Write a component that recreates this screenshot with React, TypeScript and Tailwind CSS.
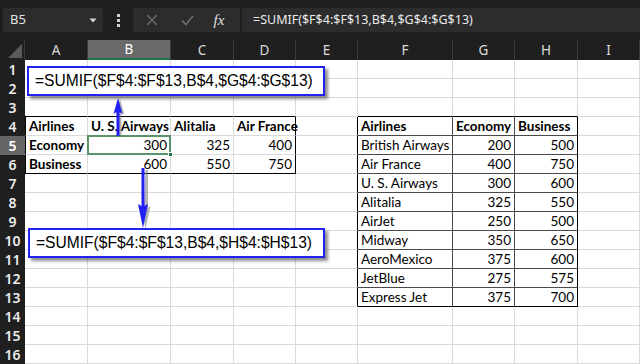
import React from "react";

type Cell = { t: string; b?: boolean; r?: boolean };

const COLS = ["A", "B", "C", "D", "E", "F", "G", "H", "I"];

const data: Record<string, Cell> = {
  A4: { t: "Airlines", b: true },
  B4: { t: "U. S. Airways", b: true },
  C4: { t: "Alitalia", b: true },
  D4: { t: "Air France", b: true },
  A5: { t: "Economy", b: true },
  B5: { t: "300", r: true },
  C5: { t: "325", r: true },
  D5: { t: "400", r: true },
  A6: { t: "Business", b: true },
  B6: { t: "600", r: true },
  C6: { t: "550", r: true },
  D6: { t: "750", r: true },
  F4: { t: "Airlines", b: true },
  G4: { t: "Economy", b: true },
  H4: { t: "Business", b: true },
};

const right: [string, string, string][] = [
  ["British Airways", "200", "500"],
  ["Air France", "400", "750"],
  ["U. S. Airways", "300", "600"],
  ["Alitalia", "325", "550"],
  ["AirJet", "250", "500"],
  ["Midway", "350", "650"],
  ["AeroMexico", "375", "600"],
  ["JetBlue", "275", "575"],
  ["Express Jet", "375", "700"],
];
right.forEach(([a, e, b], i) => {
  const r = 5 + i;
  data["F" + r] = { t: a };
  data["G" + r] = { t: e, r: true };
  data["H" + r] = { t: b, r: true };
});

function cellBorder(ci: number, row: number): string {
  const inLeft = ci >= 0 && ci <= 3 && row >= 4 && row <= 6;
  const inRight = ci >= 5 && ci <= 7 && row >= 4 && row <= 13;
  let rc = "border-r-[#dadada]";
  let bc = "border-b-[#dadada]";
  let extra = "";
  if (inLeft) {
    if (ci === 3) rc = "border-r-black";
    if (row === 6) bc = "border-b-black";
    if (ci === 0) extra = " border-l border-l-black";
  }
  if (ci >= 0 && ci <= 3 && row === 3) bc = "border-b-black";
  if (inRight) {
    rc = ci === 7 ? "border-r-black" : "border-r-[#4a4a4a]";
    bc = row === 13 ? "border-b-black" : "border-b-[#4a4a4a]";
  }
  if (ci >= 5 && ci <= 7 && row === 3) bc = "border-b-black";
  if (ci === 4 && row >= 4 && row <= 13) rc = "border-r-black";
  return `border-r border-b ${rc} ${bc}${extra}`;
}

function FormulaCallout({ text }: { text: string }) {
  return (
    <div className="h-[30px] bg-white border-2 border-[#2323f0] shadow-[3px_3px_3px_rgba(0,0,0,0.45)] flex items-center pl-[6px]">
      <span className="text-[15.6px] text-black leading-none [font-family:'Liberation_Sans',Arial,sans-serif]">
        {text}
      </span>
    </div>
  );
}

export default function App() {
  const rows = Array.from({ length: 16 }, (_, i) => i + 1);
  return (
    <div className="relative w-[640px] h-[364px] overflow-hidden bg-[#1f1f1f] [font-family:'Noto_Sans',sans-serif]">
      {/* Toolbar */}
      <div className="h-[40px] flex items-start pt-[8px] pl-[3px]">
        <div className="w-[100px] h-[24px] bg-[#2c2c2c] flex items-center justify-between pl-[7px] pr-[6px]">
          <span className="text-[13px] text-[#e4e4e4]">B5</span>
          <svg width="8" height="5" viewBox="0 0 8 5">
            <path d="M0.5 0.5 L7.5 0.5 L4 4.5 Z" fill="#d8d8d8" />
          </svg>
        </div>
        <div className="w-[30px] h-[24px] flex flex-col items-center justify-center gap-[2px]">
          <div className="w-[3px] h-[3px] bg-[#cfcfcf]" />
          <div className="w-[3px] h-[3px] bg-[#cfcfcf]" />
          <div className="w-[3px] h-[3px] bg-[#cfcfcf]" />
        </div>
        <div className="w-[107px] h-[24px] bg-[#2c2c2c] flex items-center">
          <div className="w-[36px] flex justify-center ml-[1px]">
            <svg width="12" height="12" viewBox="0 0 12 12">
              <path d="M1 1 L11 11 M11 1 L1 11" stroke="#6d6d6d" strokeWidth="1.3" />
            </svg>
          </div>
          <div className="w-[34px] flex justify-center">
            <svg width="13" height="11" viewBox="0 0 13 11">
              <path d="M1 5.5 L4.8 9.5 L12 1" stroke="#6d6d6d" strokeWidth="1.6" fill="none" />
            </svg>
          </div>
          <div className="w-[30px] flex justify-center">
            <span className="italic text-[15px] text-[#e0e0e0] leading-none [font-family:'Liberation_Serif',serif]">fx</span>
          </div>
        </div>
        <div className="flex-1 ml-[2px] h-[24px] bg-[#2c2c2c] flex items-center pl-[11px]">
          <span className="text-[12.5px] text-[#eaeaea] whitespace-nowrap">=SUMIF($F$4:$F$13,B$4,$G$4:$G$13)</span>
        </div>
      </div>

      {/* Grid */}
      <div className="grid grid-cols-[25px_63px_83px_63px_62px_62px_95px_62px_63px_62px] grid-rows-[20px_repeat(16,19px)] bg-white">
        <div className="bg-[#1f1f1f] relative border-r border-r-[#3c3c3c]">
          <svg className="absolute right-[2px] bottom-[2px]" width="14" height="14" viewBox="0 0 14 14">
            <path d="M14 0 L14 14 L0 14 Z" fill="#5a5a5a" />
          </svg>
        </div>
        {COLS.map((c) =>
          c === "B" ? (
            <div key={c} className="bg-[#6a6a6a] border-b-2 border-b-[#217346] border-r border-r-[#3c3c3c] flex items-center justify-center text-[13.5px] text-white">
              {c}
            </div>
          ) : (
            <div key={c} className="bg-[#1f1f1f] border-r border-r-[#3c3c3c] flex items-center justify-center text-[13.5px] text-[#dcdcdc]">
              {c}
            </div>
          )
        )}
        {rows.map((r) => (
          <React.Fragment key={r}>
            <div
              className={
                r === 5
                  ? "bg-[#666666] text-white flex items-center justify-center text-[14px] font-semibold"
                  : "bg-[#1f1f1f] text-[#ececec] flex items-center justify-center text-[14px] font-semibold"
              }
            >
              {r}
            </div>
            {COLS.map((c, ci) => {
              const key = c + r;
              const cell = data[key];
              const sel = key === "B5";
              return (
                <div
                  key={key}
                  className={`relative bg-white flex items-center overflow-visible whitespace-nowrap text-[13.5px] text-black [font-family:Lato,sans-serif] px-[3px] pt-[2px] ${cellBorder(ci, r)} ${
                    cell?.r ? "justify-end" : "justify-start"
                  } ${cell?.b ? "font-bold" : ""}`}
                >
                  {cell ? <span className="relative z-[1] leading-none">{cell.t}</span> : null}
                  {sel ? (
                    <div className="absolute left-[-1px] top-[-1px] right-[-1px] bottom-[-1px] border-2 border-[#5a9468] z-[2]">
                      <div className="absolute right-[-4px] bottom-[-4px] w-[5px] h-[5px] bg-[#217346] border border-white" />
                    </div>
                  ) : null}
                </div>
              );
            })}
          </React.Fragment>
        ))}
      </div>

      {/* Callout overlays */}
      <div className="absolute left-[27px] top-[66px] w-[298px] z-10">
        <FormulaCallout text="=SUMIF($F$4:$F$13,B$4,$G$4:$G$13)" />
      </div>
      <div className="absolute left-[28px] top-[228px] w-[297px] z-10">
        <FormulaCallout text="=SUMIF($F$4:$F$13,B$4,$H$4:$H$13)" />
      </div>

      {/* Up arrow */}
      <svg className="absolute left-[108px] top-[96px] z-20" width="22" height="44" viewBox="0 0 22 44">
        <path d="M12 3 L16.5 19 L13.5 17 L13.5 41 L11 41 L11 17 L7.5 19 Z" fill="#777" opacity="0.55" />
        <path d="M10 2 L14.5 18 L11.5 16 L11.5 40 L8.5 40 L8.5 16 L5.5 18 Z" fill="#2020f2" />
      </svg>
      {/* Down arrow */}
      <svg className="absolute left-[133px] top-[166px] z-20" width="22" height="66" viewBox="0 0 22 66">
        <path d="M12.5 4 L15 4 L15 42 L17.5 40 L12.5 63 L7.5 40 L11 42 Z" fill="#777" opacity="0.55" />
        <path d="M8.5 2 L11.5 2 L11.5 40 L15 38 L10 62 L5 38 L8.5 40 Z" fill="#2020f2" />
      </svg>
    </div>
  );
}
